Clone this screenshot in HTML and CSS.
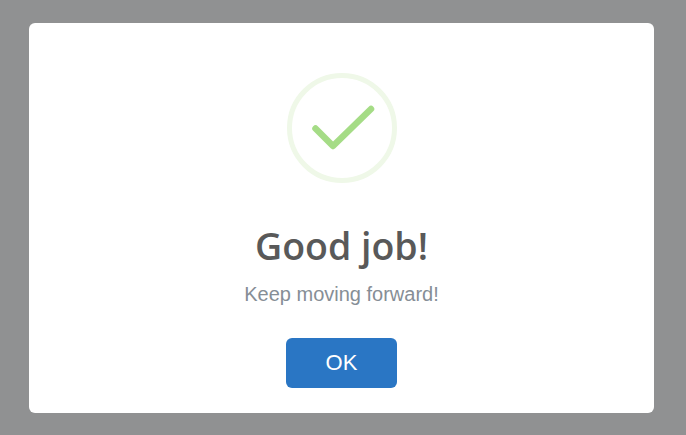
FILE: index.html
```html
<!DOCTYPE html>
<html lang="en">
<head>
<meta charset="utf-8">
<title>Good job!</title>
<link rel="stylesheet" href="styles.css">
</head>
<body>
<div class="overlay">
  <div class="modal" role="dialog">
    <svg class="icon" width="110" height="110" viewBox="0 0 110 110" aria-hidden="true">
      <circle class="ring" cx="55" cy="55" r="52.5"/>
      <path class="check" d="M28.5 55.5 L46 73 L84 36"/>
    </svg>
    <h2 class="title">Good job!</h2>
    <p class="text">Keep moving forward!</p>
    <button class="ok" type="button">OK</button>
  </div>
</div>
</body>
</html>
```
FILE: styles.css
```css
* { box-sizing: border-box; }
html, body { margin: 0; height: 100%; }
body { overflow: hidden; background: #909192; }
.overlay {
  height: 435px;
  padding: 23px 0 0 29px;
}
.modal {
  width: 625px;
  height: 390px;
  background: #fff;
  border-radius: 6px;
  padding-top: 50px;
  display: flex;
  flex-direction: column;
  align-items: center;
}
.icon { display: block; flex: none; }
.ring { fill: none; stroke: #eff8e8; stroke-width: 5; }
.check { fill: none; stroke: #a5dc86; stroke-width: 6.5; stroke-linecap: round; stroke-linejoin: round; }
.title {
  margin: 36px 0 0;
  font: 600 37.5px/54px "Open Sans", sans-serif;
  color: #595959;
  text-align: center;
}
.text {
  margin: 6px 0 0;
  font: 400 20px/30px "Liberation Sans", Arial, sans-serif;
  color: #868e96;
  text-align: center;
}
.ok {
  margin-top: 29px;
  width: 111px;
  height: 50px;
  border: 0;
  border-radius: 6px;
  background: #2a76c4;
  color: #fff;
  font: 400 22px "Liberation Sans", Arial, sans-serif;
  padding: 0;
}
```
